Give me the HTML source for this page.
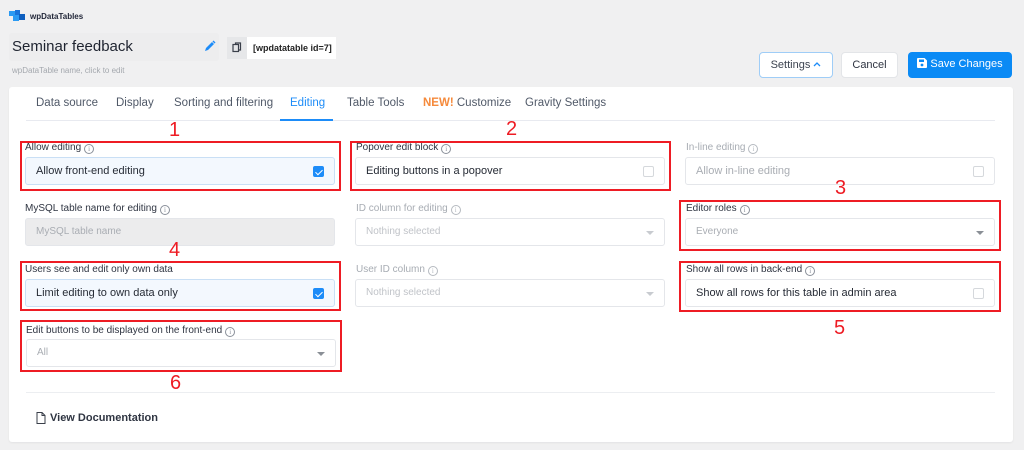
<!DOCTYPE html>
<html><head><meta charset="utf-8"><style>
*{box-sizing:border-box;margin:0;padding:0}
body{width:1024px;height:450px;background:#f0f0f1;font-family:"Liberation Sans",sans-serif;position:relative;overflow:hidden;color:#3c4350}
.a{position:absolute}
.card{left:9px;top:87px;width:1004px;height:355px;background:#fff;border-radius:3px;box-shadow:0 1px 2px rgba(0,0,0,.06)}
.tab{top:97px;font-size:11.5px;color:#505968}
.lbl{font-size:10px;color:#2f3542;white-space:nowrap;line-height:12px}
.lbl.dis{color:#a7acb3}
.i{display:inline-block;width:10px;height:10px;border:1px solid #8a909a;border-radius:50%;font-size:7px;line-height:8px;text-align:center;color:#8a909a;vertical-align:-1px;margin-left:3px;font-family:"Liberation Serif",serif}
.dis .i{border-color:#b5bac0;color:#b5bac0}
.inp{height:28px;width:310px;border:1px solid #e4e6ea;border-radius:3px;background:#fff;font-size:11px;padding-left:10px;line-height:26px;color:#262b35}
.inp.ph{color:#a9adb3;font-size:10px}
.cb{position:absolute;right:10px;top:8px;width:11px;height:11px;border:1px solid #d5d8dc;border-radius:2px;background:#fff}
.cb.on{background:#1d8cf8;border-color:#1d8cf8}
.cb.on:after{content:"";position:absolute;left:3px;top:1px;width:3px;height:6px;border:solid #fff;border-width:0 1.5px 1.5px 0;transform:rotate(45deg)}
.car{position:absolute;right:10px;top:12px;border-left:4px solid transparent;border-right:4px solid transparent;border-top:4px solid #8a8f96}
.red{border:2px solid #ee1c24}
.num{color:#ee1c24;font-size:20px;line-height:20px}
.btn{top:52px;height:26px;border-radius:4px;font-size:11px;line-height:24px;text-align:center}
</style></head><body>
<svg class="a" style="left:9px;top:10px" width="17" height="12" viewBox="0 0 17 12"><rect x="0" y="1" width="7" height="5" fill="#2b9af3"/><rect x="6" y="0" width="5" height="5" fill="#1a73d9"/><rect x="4" y="5" width="6" height="6" fill="#2b9af3"/><rect x="10" y="4" width="6" height="6" fill="#0f5fbf"/></svg>
<div class="a" style="left:30px;top:12px;font-size:8px;font-weight:bold;color:#23283a">wpDataTables</div>
<div class="a" style="left:9px;top:33px;width:210px;height:28px;background:#ededee;border-radius:3px"></div>
<div class="a" style="left:12px;top:38px;font-size:15px;color:#1f2430">Seminar feedback</div>
<svg class="a" style="left:204px;top:40px" width="12" height="12" viewBox="0 0 12 12"><path d="M1 11l1-3 6-6 2 2-6 6z M8.5 1.5l1-1 2 2-1 1z" fill="#1d8cf8"/></svg>
<div class="a" style="left:227px;top:37px;width:20px;height:22px;background:#e6e7e9"></div>
<svg class="a" style="left:232px;top:42px" width="10" height="11" viewBox="0 0 10 11"><rect x="1" y="2.5" width="5.5" height="7" fill="none" stroke="#3a3f4a" stroke-width="1.2"/><path d="M3.5 2.5V1h5v7H6.5" fill="none" stroke="#3a3f4a" stroke-width="1.2"/></svg>
<div class="a" style="left:247px;top:37px;width:89px;height:22px;background:#fff;font-size:9px;font-weight:bold;line-height:22px;padding-left:6px;color:#222">[wpdatatable id=7]</div>
<div class="a" style="left:12px;top:66px;font-size:8px;color:#a4a8ae">wpDataTable name, click to edit</div>
<div class="a btn" style="left:759px;width:74px;border:1px solid #9fcdf7;background:#fff;color:#3c4350">Settings <svg width="8" height="6" viewBox="0 0 8 6" style="vertical-align:1px"><path d="M1 5l3-3 3 3" fill="none" stroke="#1d8cf8" stroke-width="1.3"/></svg></div>
<div class="a btn" style="left:841px;width:57px;border:1px solid #e3e5e8;background:#fff;color:#2f3542">Cancel</div>
<div class="a btn" style="left:908px;width:104px;background:#0a8af5;color:#fff"><svg width="10" height="10" viewBox="0 0 10 10" style="vertical-align:-1px;margin-right:3px"><path d="M0 1a1 1 0 0 1 1-1h6.5L10 2.5V9a1 1 0 0 1-1 1H1a1 1 0 0 1-1-1z" fill="#fff"/><rect x="2" y="1.5" width="5" height="2.5" fill="#0a8af5"/><circle cx="5" cy="7" r="1.4" fill="#0a8af5"/></svg>Save Changes</div>
<div class="a card"></div>
<div class="a tab" style="left:36px">Data source</div>
<div class="a tab" style="left:116px">Display</div>
<div class="a tab" style="left:174px">Sorting and filtering</div>
<div class="a tab" style="left:290px;color:#1d8cf8">Editing</div>
<div class="a tab" style="left:347px">Table Tools</div>
<div class="a tab" style="left:423px"><b style="color:#f58a3c">NEW!</b> Customize</div>
<div class="a tab" style="left:525px">Gravity Settings</div>
<div class="a" style="left:26px;top:120px;width:969px;height:1px;background:#e8eaf0"></div>
<div class="a" style="left:280px;top:119px;width:53px;height:2px;background:#1d8cf8"></div>

<div class="a lbl" style="left:25px;top:142px">Allow editing<span class="i">i</span></div>
<div class="a inp" style="left:25px;top:157px;background:#f3f8fe;border-color:#c9dff5">Allow front-end editing<div class="cb on"></div></div>
<div class="a lbl" style="left:356px;top:142px">Popover edit block<span class="i">i</span></div>
<div class="a inp" style="left:355px;top:157px">Editing buttons in a popover<div class="cb"></div></div>
<div class="a lbl dis" style="left:686px;top:142px">In-line editing<span class="i">i</span></div>
<div class="a inp" style="left:685px;top:157px;color:#a9adb3">Allow in-line editing<div class="cb"></div></div>

<div class="a lbl" style="left:25px;top:203px">MySQL table name for editing<span class="i">i</span></div>
<div class="a inp ph" style="left:25px;top:218px;background:#ececed">MySQL table name</div>
<div class="a lbl dis" style="left:356px;top:203px">ID column for editing<span class="i">i</span></div>
<div class="a inp ph" style="left:355px;top:218px;color:#c0c3c8">Nothing selected<div class="car" style="border-top-color:#c8cbd0"></div></div>
<div class="a lbl" style="left:686px;top:203px">Editor roles<span class="i">i</span></div>
<div class="a inp ph" style="left:685px;top:218px">Everyone<div class="car"></div></div>

<div class="a lbl" style="left:25px;top:264px">Users see and edit only own data</div>
<div class="a inp" style="left:25px;top:279px;background:#f3f8fe;border-color:#c9dff5">Limit editing to own data only<div class="cb on"></div></div>
<div class="a lbl dis" style="left:356px;top:264px">User ID column<span class="i">i</span></div>
<div class="a inp ph" style="left:355px;top:279px;color:#c0c3c8">Nothing selected<div class="car" style="border-top-color:#c8cbd0"></div></div>
<div class="a lbl" style="left:686px;top:264px">Show all rows in back-end<span class="i">i</span></div>
<div class="a inp" style="left:685px;top:279px">Show all rows for this table in admin area<div class="cb"></div></div>

<div class="a lbl" style="left:26px;top:325px">Edit buttons to be displayed on the front-end<span class="i">i</span></div>
<div class="a inp ph" style="left:26px;top:339px">All<div class="car"></div></div>

<div class="a" style="left:26px;top:392px;width:969px;height:1px;background:#eceef1"></div>
<svg class="a" style="left:36px;top:412px" width="10" height="12" viewBox="0 0 10 12"><path d="M1 .5h5l3 3v8H1z M6 .5v3h3" fill="none" stroke="#3a3f4a" stroke-width="1"/></svg>
<div class="a" style="left:50px;top:412px;font-size:11px;font-weight:bold;color:#2f3542">View Documentation</div>

<div class="a red" style="left:20px;top:141px;width:321px;height:50px"></div>
<div class="a red" style="left:350px;top:141px;width:321px;height:50px"></div>
<div class="a red" style="left:679px;top:200px;width:322px;height:51px"></div>
<div class="a red" style="left:20px;top:261px;width:321px;height:50px"></div>
<div class="a red" style="left:679px;top:261px;width:322px;height:51px"></div>
<div class="a red" style="left:20px;top:320px;width:322px;height:52px"></div>
<div class="a num" style="left:169px;top:120px">1</div>
<div class="a num" style="left:506px;top:119px">2</div>
<div class="a num" style="left:835px;top:178px">3</div>
<div class="a num" style="left:169px;top:240px">4</div>
<div class="a num" style="left:834px;top:318px">5</div>
<div class="a num" style="left:170px;top:373px">6</div>
</body></html>
